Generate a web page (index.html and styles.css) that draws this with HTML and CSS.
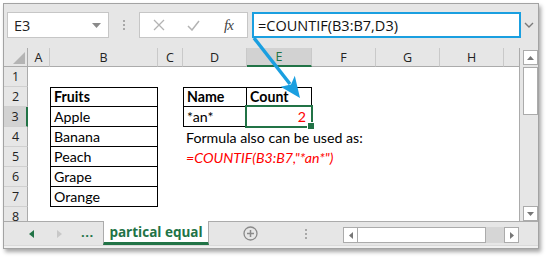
FILE: index.html
```html
<!DOCTYPE html>
<html>
<head>
<meta charset="utf-8">
<link rel="stylesheet" href="styles.css">
</head>
<body>
<div class="window">
  <div class="fbar">
    <div class="namebox"><span>E3</span><svg class="caret" width="9" height="5" viewBox="0 0 9 5"><path d="M0 0h9L4.5 5z" fill="#8a8a8a"/></svg></div>
    <div class="fsep"><i></i><i></i><i></i></div>
    <div class="fxbox">
      <svg class="ic" width="12" height="12" viewBox="0 0 12 12"><path d="M1 1l10 10M11 1L1 11" stroke="#b3b3b3" stroke-width="1.3" fill="none"/></svg>
      <svg class="ic" width="13" height="11" viewBox="0 0 13 11"><path d="M1 6l4 4 7-9" stroke="#b3b3b3" stroke-width="1.5" fill="none"/></svg>
      <span class="fx">fx</span>
    </div>
    <div class="formula">=COUNTIF(B3:B7,D3)</div>
    <div class="fexpand"><svg width="10" height="6" viewBox="0 0 10 6"><path d="M1 1l4 4 4-4" stroke="#7a7a7a" stroke-width="1.4" fill="none"/></svg></div>
  </div>
  <div class="sheet">
    <div class="grid">
      <div class="h corner"><svg width="12" height="12" viewBox="0 0 12 12"><path d="M12 0v12H0z" fill="#b4b4b4"/></svg></div>
      <div class="h">A</div><div class="h">B</div><div class="h">C</div><div class="h">D</div><div class="h sel">E</div><div class="h">F</div><div class="h">G</div><div class="h">H</div><div class="h last"></div>

      <div class="r">1</div><div class="c"></div><div class="c"></div><div class="c"></div><div class="c"></div><div class="c"></div><div class="c"></div><div class="c"></div><div class="c"></div><div class="c"></div>

      <div class="r">2</div><div class="c"></div><div class="c t tl bold">Fruits</div><div class="c"></div><div class="c t tl bold">Name</div><div class="c t tt bold">Count</div><div class="c"></div><div class="c"></div><div class="c"></div><div class="c"></div>

      <div class="r sel">3</div><div class="c"></div><div class="c t">Apple</div><div class="c"></div><div class="c t">*an*</div><div class="c t tr active"><span class="red">2</span></div><div class="c"></div><div class="c"></div><div class="c"></div><div class="c"></div>

      <div class="r">4</div><div class="c"></div><div class="c t">Banana</div><div class="c"></div><div class="c over"><span>Formula also can be used as:</span></div><div class="c"></div><div class="c"></div><div class="c"></div><div class="c"></div><div class="c"></div>

      <div class="r">5</div><div class="c"></div><div class="c t">Peach</div><div class="c"></div><div class="c over"><span class="red ital">=COUNTIF(B3:B7,"*an*")</span></div><div class="c"></div><div class="c"></div><div class="c"></div><div class="c"></div><div class="c"></div>

      <div class="r">6</div><div class="c"></div><div class="c t">Grape</div><div class="c"></div><div class="c"></div><div class="c"></div><div class="c"></div><div class="c"></div><div class="c"></div><div class="c"></div>

      <div class="r">7</div><div class="c"></div><div class="c t">Orange</div><div class="c"></div><div class="c"></div><div class="c"></div><div class="c"></div><div class="c"></div><div class="c"></div><div class="c"></div>

      <div class="r part"><span>8</span></div><div class="c"></div><div class="c"></div><div class="c"></div><div class="c"></div><div class="c"></div><div class="c"></div><div class="c"></div><div class="c"></div><div class="c"></div>
    </div>
    <div class="vscroll">
      <div class="sbtn"><svg width="7" height="4" viewBox="0 0 7 4"><path d="M0 4h7L3.5 0z" fill="#777"/></svg></div>
      <div class="vthumb"></div>
      <div class="vspace"></div>
      <div class="sbtn"><svg width="7" height="4" viewBox="0 0 7 4"><path d="M0 0h7L3.5 4z" fill="#777"/></svg></div>
    </div>
  </div>
  <div class="tabbar">
    <div class="nav">
      <svg class="nl" width="5" height="8" viewBox="0 0 5 8"><path d="M5 0v8L0 4z" fill="#217346"/></svg>
      <svg class="nr" width="5" height="8" viewBox="0 0 5 8"><path d="M0 0v8l5-4z" fill="#c8c8c8"/></svg>
      <span class="more">...</span>
    </div>
    <div class="tab">partical equal</div>
    <div class="plus"><svg width="15" height="15" viewBox="0 0 15 15"><circle cx="7.5" cy="7.5" r="6.5" fill="none" stroke="#8a8a8a" stroke-width="1.3"/><path d="M7.5 4v7M4 7.5h7" stroke="#8a8a8a" stroke-width="1.5"/></svg></div>
    <div class="hsep"><i></i><i></i><i></i></div>
    <div class="hscroll">
      <div class="hbtn"><svg width="4" height="7" viewBox="0 0 4 7"><path d="M4 0v7L0 3.5z" fill="#777"/></svg></div>
      <div class="hthumb"></div>
      <div class="htrack"></div>
      <div class="hbtn"><svg width="4" height="7" viewBox="0 0 4 7"><path d="M0 0v7l4-3.5z" fill="#777"/></svg></div>
    </div>
  </div>
  <div class="band"></div>
</div>
<svg class="arrow" width="547" height="261" viewBox="0 0 547 261">
  <path d="M254 38L290 84" stroke="#1a9fe0" stroke-width="3.5" fill="none"/>
  <path d="M300 98L294.8 75.7L291 84.5L280.6 86.7z" fill="#1a9fe0"/>
</svg>
</body>
</html>
```
FILE: styles.css
```css
* { box-sizing: border-box; }
html, body { margin: 0; padding: 0; }
body { background: #fff; width: 547px; height: 261px; position: relative; overflow: hidden; font-family: "Liberation Sans", Arial, sans-serif; }

.window {
  margin: 3px 0 0 3px;
  width: 536px;
  height: 246px;
  border: 1px solid #a3a3a3;
  background: #e6e6e6;
  box-shadow: 2px 3px 4px rgba(0,0,0,0.35);
  display: flex;
  flex-direction: column;
}

.fbar { margin-top: 8px; height: 26px; display: flex; padding-left: 3px; flex: none; }
.namebox {
  width: 102px; background: #fff; border: 1px solid #c6c6c6;
  display: flex; align-items: center; justify-content: space-between;
  padding: 0 7px 0 6px;
  font-family: "Open Sans", sans-serif; font-size: 14.5px; color: #222;
}
.fsep { width: 30px; display: flex; flex-direction: column; align-items: center; justify-content: center; gap: 2px; }
.fsep i, .hsep i { display: block; width: 2px; height: 2px; background: #a8a8a8; flex: none; }
.fxbox {
  width: 109px; background: #fff; border: 1px solid #c6c6c6;
  display: flex; align-items: center; padding-left: 13px;
}
.fxbox .ic { margin-right: 22px; }
.fxbox .ic + .ic { margin-right: 24px; }
.fx { font-family: "Liberation Serif", serif; font-style: italic; font-size: 15px; color: #444; letter-spacing: -1px; }
.formula {
  margin-left: 4px; width: 269px; background: #fff; border: 2px solid #1a9fe0;
  display: flex; align-items: center; padding-left: 4px;
  font-family: "Open Sans", sans-serif; font-size: 14.5px; color: #111;
}
.fexpand { width: 16px; display: flex; align-items: center; justify-content: center; }

.sheet { margin-top: 10px; height: 173px; display: flex; flex: none; }
.grid {
  display: grid;
  grid-template-columns: 24px 22px 108px 25px 64px 65px 64px 64px 64px 15px;
  grid-template-rows: 19px repeat(7, 20px) 14px;
  background: #fff;
  width: 515px;
  overflow: hidden;
}
.h {
  background: #e6e6e6; border-right: 1px solid #c9c9c9; border-bottom: 1px solid #ababab;
  display: flex; align-items: center; justify-content: center;
  font-family: "Open Sans", sans-serif; font-size: 12.5px; color: #222;
}
.h.last { border-right: none; }
.h.corner { align-items: flex-end; justify-content: flex-end; padding: 0 2px 2px 0; border-right: 1px solid #ababab; }
.h.sel { background: #d2d2d2; color: #217346; border-bottom: 2px solid #217346; }
.r {
  background: #e6e6e6; border-right: 1px solid #ababab; border-bottom: 1px solid #d0d0d0;
  display: flex; align-items: center; justify-content: center;
  font-family: "Open Sans", sans-serif; font-size: 12.5px; color: #222;
}
.r.sel { background: #d2d2d2; border-right: 2px solid #217346; }
.r.part { align-items: flex-start; border-bottom: none; overflow: hidden; }
.r.part span { display: block; line-height: 14px; margin-top: 3px; }
.c {
  display: flex; align-items: flex-end; padding: 0 0 1px 3px;
  font-family: "Lato", "Liberation Sans", sans-serif; font-size: 14.2px; color: #000;
  white-space: nowrap; line-height: 17px;
}
.c.t { border-left: 1px solid #000; border-right: 1px solid #000; border-bottom: 1px solid #000; }
.c.tl { border-top: 1px solid #000; }
.c.tt { border-top: 1px solid #000; border-left: none; }
.c.tr { border-left: none; justify-content: flex-end; padding-right: 5px; }
.bold { font-weight: bold; }
.red { color: #ff0000; }
.ital { font-style: italic; }
.over { overflow: visible; }
.active { position: relative; }
.active::after {
  content: ""; position: absolute; left: -2px; top: -2px; right: -2px; bottom: -2px;
  border: 2px solid #217346;
}
.active::before {
  content: ""; position: absolute; right: -4px; bottom: -4px; width: 6px; height: 6px;
  background: #217346; border: 1px solid #fff; z-index: 2;
}

.vscroll {
  width: 19px; border-left: 1px solid #ababab; padding: 2px 0 0 3px;
  display: flex; flex-direction: column;
}
.sbtn {
  width: 15px; height: 15px; background: #fff; border: 1px solid #ababab;
  display: flex; align-items: center; justify-content: center; flex: none;
}
.vthumb { width: 15px; height: 48px; margin-top: 2px; background: #fff; border: 1px solid #ababab; flex: none; }
.vspace { flex: 1; }

.tabbar {
  height: 24px; flex: none; display: flex; border-top: 1px solid #ababab;
}
.nav { width: 99px; flex: none; display: flex; align-items: center; padding-left: 25px; }
.nl { margin-right: 23px; }
.nr { margin-right: 19px; }
.more { font-family: "Open Sans", sans-serif; font-weight: bold; color: #217346; font-size: 13px; letter-spacing: 0.5px; margin-top: -4px; }
.tab {
  width: 106px; flex: none; margin-top: -1px; background: #fff;
  border-left: 1px solid #ababab; border-right: 1px solid #ababab; border-bottom: 3px solid #217346;
  display: flex; align-items: center; justify-content: center;
  font-family: "Open Sans", sans-serif; font-weight: bold; font-size: 13.5px; color: #217346;
}
.plus { width: 60px; flex: none; display: flex; align-items: center; padding-left: 34px; }
.plus svg { flex: none; }
.hsep { width: 74px; flex: none; display: flex; flex-direction: column; align-items: center; justify-content: center; gap: 2px; }
.hscroll { width: 176px; flex: none; height: 16px; margin-top: 5px; display: flex; }
.hbtn { width: 15px; height: 16px; background: #fff; border: 1px solid #ababab; display: flex; align-items: center; justify-content: center; flex: none; }
.hthumb { width: 128px; background: #fff; border: 1px solid #ababab; border-left: none; }
.htrack { flex: 1; background: #d6d6d6; }
.band { flex: 1; background: #f0f0f0; border-top: 1px solid #dadada; }

.arrow { position: absolute; left: 0; top: 0; pointer-events: none; }
```
